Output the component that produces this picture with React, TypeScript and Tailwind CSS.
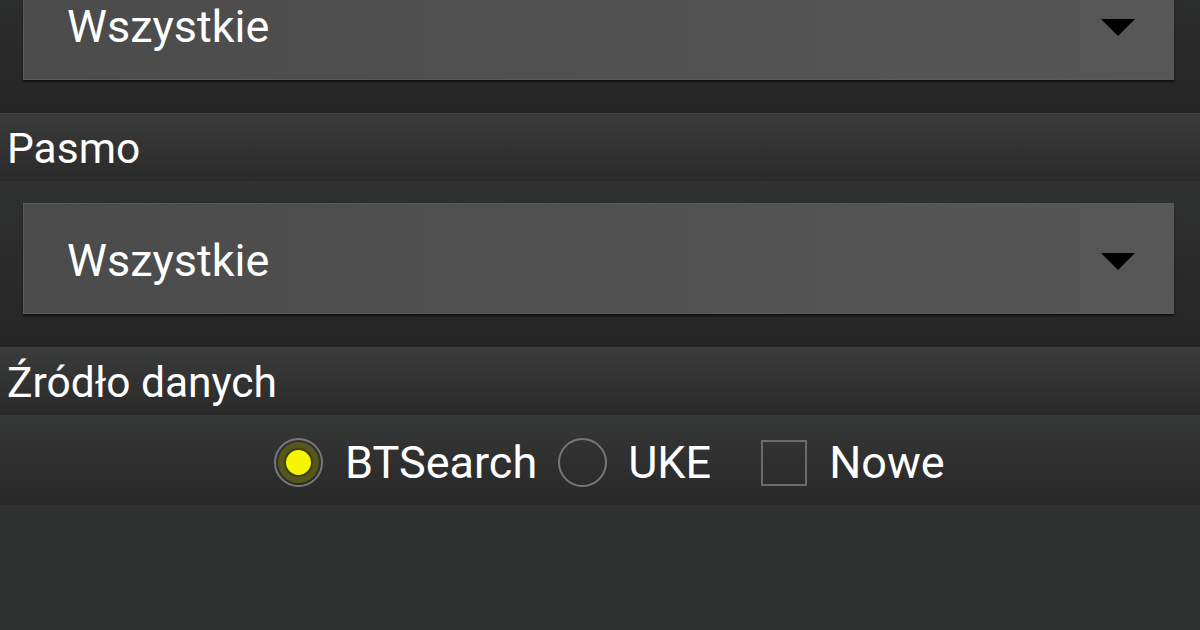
import { ReactNode } from "react";

const font = { fontFamily: "Roboto, 'Noto Sans', sans-serif" };

const Header = ({ children }: { children: ReactNode }) => (
  <div className="h-[68px] shrink-0 flex items-center pl-[7px] pt-[4px] bg-gradient-to-b from-[#3a3b3b] to-[#2a2a2a] border-t border-[#404141]">
    <span className="text-[42.5px] text-white leading-none">{children}</span>
  </div>
);

const Select = ({ value, className = "" }: { value: string; className?: string }) => (
  <div className={`h-[166px] shrink-0 pt-[22px] pl-[23px] pr-[26px] bg-gradient-to-b from-[#303131] to-[#252525] ${className}`}>
    <div className="h-[111px] flex items-center justify-between pl-[43px] pr-[38px] bg-gradient-to-r from-[#4b4b4b] to-[#575757] border border-[#5a5a5a] shadow-[0_2px_2px_rgba(0,0,0,0.6)]">
      <span className="text-[45px] text-white leading-none pt-[3px]">{value}</span>
      <svg width="34" height="17" viewBox="0 0 34 17" className="mt-[6px]">
        <path d="M0 0 L34 0 L17 17 Z" fill="#000" />
      </svg>
    </div>
  </div>
);

const Radio = ({ checked }: { checked?: boolean }) => (
  <div className="w-[49px] h-[49px] rounded-full border-2 border-[#777] flex items-center justify-center">
    {checked && (
      <div className="w-[41px] h-[41px] rounded-full bg-[#55561c] flex items-center justify-center">
        <div className="w-[29px] h-[29px] rounded-full bg-[#f6f600] border-2 border-[#3d3d10]" />
      </div>
    )}
  </div>
);

const App = () => {
  return (
    <div className="w-[1200px] h-[630px] overflow-hidden bg-[#2e2f2f] flex flex-col" style={font}>
      <Select value="Wszystkie" className="-mt-[53px]" />
      <Header>Pasmo</Header>
      <Select value="Wszystkie" />
      <Header>Źródło danych</Header>
      <div className="h-[90px] shrink-0 flex items-center pl-[274px] pt-[5px] bg-gradient-to-b from-[#363737] to-[#282828]">
        <Radio checked />
        <span className="ml-[22px] text-[45px] text-white leading-none">BTSearch</span>
        <div className="ml-[21px]">
          <Radio />
        </div>
        <span className="ml-[21px] text-[45px] text-white leading-none">UKE</span>
        <div className="ml-[50px] w-[46px] h-[46px] border-2 border-[#6b6b6b]" />
        <span className="ml-[22px] text-[45px] text-white leading-none">Nowe</span>
      </div>
      <div className="flex-1 bg-[#2e2f2f]" />
    </div>
  );
};

export default App;
